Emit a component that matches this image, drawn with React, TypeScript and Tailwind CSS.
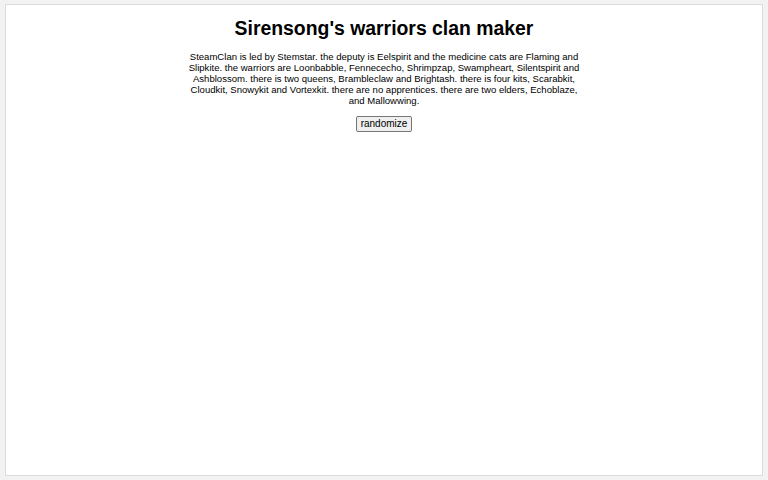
export default function App() {
  return (
    <div className="h-[480px] w-[768px] bg-[#f2f2f2] p-[4px] pl-[5px] pr-[5px] font-['Liberation_Sans',Arial,sans-serif] text-black">
      <div className="flex h-full flex-col items-center border border-[#dcdcdc] bg-white">
        <h1 className="mt-[11px] text-[19.4px] font-bold leading-[24px]">Sirensong's warriors clan maker</h1>
        <p className="mt-[11px] w-[396px] text-center text-[9.55px] leading-[11px]">
          SteamClan is led by Stemstar. the deputy is Eelspirit and the medicine cats are Flaming and Slipkite. the
          warriors are Loonbabble, Fennececho, Shrimpzap, Swampheart, Silentspirit and Ashblossom. there is two
          queens, Brambleclaw and Brightash. there is four kits, Scarabkit, Cloudkit, Snowykit and Vortexkit. there are
          no apprentices. there are two elders, Echoblaze, and Mallowwing.
        </p>
        <button className="mt-[10px] rounded-[2px] border border-[#767676] bg-[#efefef] px-[4px] py-[1px] text-[10px] leading-[12px]">
          randomize
        </button>
      </div>
    </div>
  )
}
